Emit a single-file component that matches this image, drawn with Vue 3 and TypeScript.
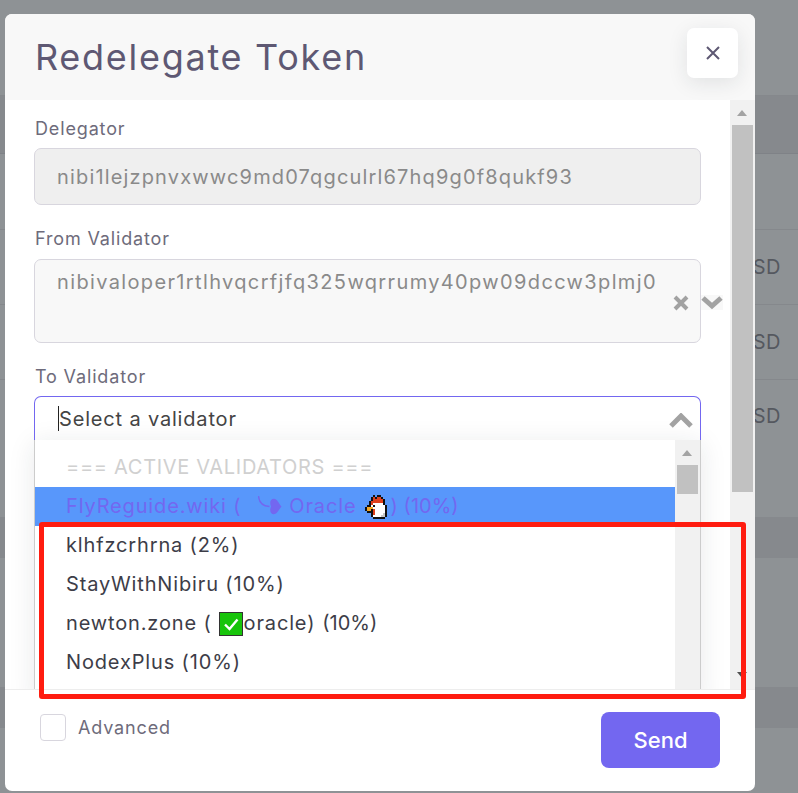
<script setup lang="ts">
const chicken: string[] = [
  '....K.KK...',
  '...KRKRRK..',
  '...KRRRRRK.',
  '..KRRRRRRK.',
  '..KRWWWWWK.',
  '.KKWKWWWWWK',
  'KOOOWWWWWWK',
  'KOOKRWWWWWK',
  '.KKKRWWWWWK',
  '...KRWWWWGK',
  '...KWWWWGGK',
  '....KKKKKK.',
];

const palette: Record<string, string> = {
  K: '#111111',
  R: '#e0401c',
  O: '#f5a623',
  W: '#ffffff',
  G: '#c9c9c9',
};

const pixels = chicken.flatMap((row, y) =>
  row
    .split('')
    .map((c, x) => ({ x, y, c }))
    .filter((p) => p.c !== '.'),
);
</script>

<template>
  <div class="page">
    <div class="backdrop">
      <div class="bg-row bg-row--top"></div>
      <div class="bg-row bg-row--head"></div>
      <div class="bg-row bg-row--a"></div>
      <div class="bg-row bg-row--b"><span>SD</span></div>
      <div class="bg-row bg-row--b"><span>SD</span></div>
      <div class="bg-row bg-row--c"><span>SD</span></div>
      <div class="bg-row bg-row--band"></div>
      <div class="bg-row bg-row--d"></div>
      <div class="bg-row bg-row--band"></div>
    </div>

    <div class="modal">
      <header class="modal__header">
        <h2 class="modal__title">Redelegate Token</h2>
        <button class="modal__close" type="button" aria-label="Close">
          <svg width="16" height="16" viewBox="0 0 16 16">
            <path d="M2 2 L14 14 M14 2 L2 14" stroke="#5e5873" stroke-width="2" fill="none" />
          </svg>
        </button>
      </header>

      <div class="modal__body">
        <div class="form">
          <label class="form__label">Delegator</label>
          <div class="input input--disabled">nibi1lejzpnvxwwc9md07qgculrl67hq9g0f8qukf93</div>

          <label class="form__label form__label--next form__label--from">From Validator</label>
          <div class="input input--from">
            nibivaloper1rtlhvqcrfjfq325wqrrumy40pw09dccw3plmj0
            <svg class="input__clear" width="16" height="16" viewBox="0 0 16 16">
              <path d="M2 2 L14 14 M14 2 L2 14" stroke="#a2a2a2" stroke-width="4" fill="none" />
            </svg>
            <svg class="input__chevron" width="22" height="15" viewBox="0 0 22 15">
              <path d="M2 3 L11 11 L20 3" stroke="#a2a2a2" stroke-width="5" fill="none" />
            </svg>
          </div>

          <label class="form__label form__label--next">To Validator</label>
          <div class="select">
            <span class="select__caret"></span>
            <span>Select a validator</span>
            <svg class="select__chevron" width="24" height="16" viewBox="0 0 24 16">
              <path d="M2 13 L12 3 L22 13" stroke="#a2a2a2" stroke-width="5" fill="none" />
            </svg>
          </div>
          <div class="dropdown">
            <ul class="dropdown__list">
              <li class="dropdown__item dropdown__item--muted">=== ACTIVE VALIDATORS ===</li>
              <li class="dropdown__item dropdown__item--active">FlyReguide.wiki (<svg class="glyph" width="24" height="24" viewBox="0 0 24 24">
                  <path d="M0.5 1 C1 7 5 11 11.5 11.5" stroke="#7367f0" stroke-width="1.4" fill="none" />
                  <path d="M17 4 C20 5 21 9 23.5 11.5 C21 14 20 18 17 19 C13 20 11 16 13 11.5 C11 7 13 3 17 4 Z" fill="#7367f0" />
                </svg>Oracle<svg class="chicken" width="22" height="24" viewBox="0 0 11 12" shape-rendering="crispEdges">
                  <rect
                    v-for="p in pixels"
                    :key="`${p.x}-${p.y}`"
                    :x="p.x"
                    :y="p.y"
                    width="1"
                    height="1"
                    :fill="palette[p.c]"
                  />
                </svg>)<span class="dropdown__rate dropdown__rate--active">(10%)</span></li>
              <li class="dropdown__item">klhfzcrhrna (2%)</li>
              <li class="dropdown__item">StayWithNibiru (10%)</li>
              <li class="dropdown__item">newton.zone (<svg class="check" width="24" height="24" viewBox="0 0 24 24">
                  <rect x="0.5" y="0.5" width="23" height="23" fill="#17c40a" stroke="#333333" />
                  <path d="M6 12.5 L10.5 17 L18.5 7.5" stroke="#ffffff" stroke-width="2.4" fill="none" />
                </svg>oracle)<span class="dropdown__rate">(10%)</span></li>
              <li class="dropdown__item">NodexPlus (10%)</li>
            </ul>
            <div class="scrollbar scrollbar--inner">
              <span class="scrollbar__up"></span>
              <span class="scrollbar__thumb scrollbar__thumb--inner"></span>
            </div>
          </div>
        </div>

        <div class="scrollbar scrollbar--outer">
          <span class="scrollbar__up"></span>
          <span class="scrollbar__thumb scrollbar__thumb--outer"></span>
          <span class="scrollbar__down"></span>
        </div>
      </div>

      <footer class="modal__footer">
        <label class="advanced">
          <span class="advanced__box"></span>
          Advanced
        </label>
        <button class="send" type="button">Send</button>
      </footer>
    </div>

    <div class="highlight"></div>
  </div>
</template>

<style scoped>
.page {
  position: relative;
  width: 798px;
  height: 793px;
  overflow: hidden;
  background: #8e9295;
  font-family: Inter, 'Open Sans', sans-serif;
  color: #6e6b7b;
}

.backdrop {
  position: absolute;
  inset: 0;
  display: flex;
  flex-direction: column;
}

.bg-row {
  display: flex;
  align-items: center;
  justify-content: flex-end;
  flex: none;
  box-sizing: border-box;
  padding-right: 17px;
  color: #55585f;
  font-size: 20px;
  letter-spacing: 0.5px;
}

.bg-row--top {
  height: 96px;
  border-bottom: 1px solid #85888c;
}

.bg-row--head {
  height: 58px;
  background: #86898d;
  border-bottom: 1px solid #7f8287;
}

.bg-row--a {
  height: 76px;
  border-bottom: 1px solid #85888c;
}

.bg-row--b {
  height: 75px;
  border-bottom: 1px solid #85888c;
}

.bg-row--c {
  height: 137px;
  padding-bottom: 65px;
}

.bg-row--band {
  height: 41px;
  background: #86898d;
}

.bg-row--d {
  height: 129px;
}

.modal {
  position: relative;
  display: flex;
  flex-direction: column;
  width: 750px;
  height: 777px;
  margin: 14px 0 0 5px;
  overflow: hidden;
  background: #ffffff;
  border-radius: 7px;
}

.modal__header {
  display: flex;
  flex: none;
  align-items: flex-start;
  justify-content: space-between;
  box-sizing: border-box;
  height: 86px;
  padding: 14px 17px 0 30px;
  background: #f8f8f8;
}

.modal__title {
  margin: 0;
  padding-top: 5px;
  color: #5e5873;
  font-size: 36px;
  font-weight: 400;
  line-height: 48px;
  letter-spacing: 1.72px;
}

.modal__close {
  display: flex;
  align-items: center;
  justify-content: center;
  width: 51px;
  height: 50px;
  padding: 0;
  border: 0;
  border-radius: 7px;
  background: #ffffff;
  box-shadow: 0 5px 20px rgba(34, 41, 47, 0.1);
}

.modal__body {
  display: flex;
  flex: none;
  height: 589px;
  overflow: hidden;
}

.form {
  flex: none;
  box-sizing: border-box;
  width: 725px;
  padding: 18px 29px 0;
}

.form__label {
  display: block;
  height: 20px;
  margin-bottom: 10px;
  padding-left: 1px;
  font-size: 18px;
  line-height: 22px;
  letter-spacing: 0.85px;
}

.form__label--next {
  margin-top: 23px;
}

.form__label--from {
  margin-bottom: 11px;
}

.input {
  position: relative;
  box-sizing: border-box;
  width: 667px;
  padding: 0 22px;
  border: 1px solid #d8d6de;
  border-radius: 7px;
  color: #8a8a8a;
  font-size: 20px;
  white-space: nowrap;
}

.input--disabled {
  height: 57px;
  background: #efefef;
  letter-spacing: 1.16px;
  line-height: 57px;
}

.input--from {
  height: 84px;
  background: #f8f8f8;
  letter-spacing: 1.36px;
  line-height: 44px;
}

.input__clear {
  position: absolute;
  top: 35px;
  left: 638px;
}

.input__chevron {
  position: absolute;
  top: 35px;
  left: 666px;
  background: #f8f8f8;
}

.select {
  position: relative;
  box-sizing: border-box;
  display: flex;
  align-items: center;
  width: 667px;
  height: 44px;
  padding: 0 0 0 23px;
  border: 1px solid #7367f0;
  border-bottom: 0;
  border-radius: 7px 7px 0 0;
  color: #444444;
  font-size: 20px;
  letter-spacing: 0.83px;
}

.select__caret {
  width: 1px;
  height: 25px;
  background: #222222;
}

.select__chevron {
  position: absolute;
  top: 16px;
  left: 634px;
}

.dropdown {
  display: flex;
  box-sizing: border-box;
  width: 667px;
  height: 260px;
  border-right: 1px solid #cccccc;
  border-left: 1px solid #cccccc;
  background: #ffffff;
  box-shadow: 0 4px 25px rgba(34, 41, 47, 0.1);
}

.dropdown__list {
  flex: 1;
  margin: 0;
  padding: 8px 0 0;
  list-style: none;
}

.dropdown__item {
  box-sizing: border-box;
  height: 39px;
  padding-left: 30px;
  color: #3d3d48;
  font-size: 20px;
  letter-spacing: 0.85px;
  line-height: 38px;
  text-indent: 1px;
  white-space: pre;
}

.dropdown__item--muted {
  color: #d0d0d0;
  letter-spacing: 0.68px;
}

.dropdown__item--active {
  background: #5897fb;
  color: #7367f0;
}

.dropdown__rate {
  margin-left: 7px;
  letter-spacing: 0;
}

.dropdown__rate--active {
  margin-left: 5px;
}

.glyph,
.chicken,
.check {
  vertical-align: -6px;
}

.glyph {
  margin: 0 7px 0 17px;
}

.chicken {
  margin: 0 3px 0 9px;
}

.check {
  margin: 0 1px 0 7px;
}

.scrollbar {
  position: relative;
  display: block;
  flex: none;
  width: 25px;
  background: #f1f1f1;
}

.scrollbar__up,
.scrollbar__down {
  position: absolute;
  left: 7px;
  width: 0;
  height: 0;
  border-right: 5.5px solid transparent;
  border-left: 5.5px solid transparent;
}

.scrollbar__up {
  top: 10px;
  border-bottom: 6px solid #a3a3a3;
}

.scrollbar__down {
  top: 572px;
  border-top: 6px solid #505050;
}

.scrollbar__thumb {
  position: absolute;
  left: 2px;
  width: 21px;
  background: #c1c1c1;
}

.scrollbar__thumb--outer {
  top: 25px;
  height: 367px;
}

.scrollbar__thumb--inner {
  top: 25px;
  height: 29px;
}

.modal__footer {
  display: flex;
  flex: 1;
  align-items: flex-start;
  justify-content: space-between;
  box-sizing: border-box;
  padding: 22px 35px 0;
  border-top: 1px solid #ededed;
}

.advanced {
  display: flex;
  align-items: center;
  gap: 12px;
  height: 31px;
  font-size: 18px;
  letter-spacing: 0.85px;
}

.advanced__box {
  box-sizing: border-box;
  width: 26px;
  height: 27px;
  border: 1px solid #d8d6de;
  border-radius: 4px;
}

.send {
  width: 119px;
  height: 56px;
  border: 0;
  border-radius: 8px;
  background: #7367f0;
  color: #ffffff;
  font-family: inherit;
  font-size: 22px;
  font-weight: 500;
}

.highlight {
  position: absolute;
  top: 522px;
  left: 39px;
  box-sizing: border-box;
  width: 707px;
  height: 177px;
  border: 5px solid #ff1c10;
  border-radius: 3px;
}
</style>
